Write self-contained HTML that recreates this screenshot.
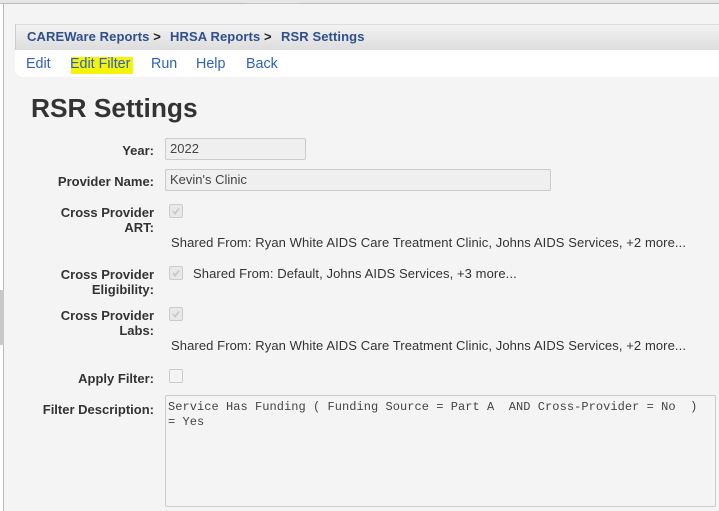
<!DOCTYPE html>
<html><head><style>
body{margin:0;width:719px;height:511px;overflow:hidden;background:#fff;font-family:"Liberation Sans",sans-serif;position:relative}
.abs{position:absolute}
.lbl{position:absolute;right:565px;text-align:right;font-weight:bold;font-size:13px;color:#333;line-height:15px}
.txt{position:absolute;font-size:13px;color:#333;letter-spacing:0.09px}
.cb{position:absolute;width:12px;height:12px;border:1px solid #ccc;border-radius:2px;background:#e8e8e8;left:169px}
.cb svg{position:absolute;left:1px;top:1px}
.m{position:absolute;top:56px;font-size:14.3px;color:#2f5fc0}
.bc{position:absolute;top:29px;font-size:13px;font-weight:bold;color:#2f4f8f;letter-spacing:0.1px}
</style></head><body>
<div class="abs" style="left:0;top:0;width:719px;height:3px;background:#e6e6e6"></div>
<div class="abs" style="left:0;top:3px;width:719px;height:1px;background:#bbb"></div>
<div class="abs" style="left:245px;top:3px;width:55px;height:7px;background:#c4c4c4"></div>
<div class="abs" style="left:3px;top:3px;width:1px;height:508px;background:#bbb"></div>
<div class="abs" style="left:0;top:290px;width:4px;height:55px;background:#c8c8c8"></div>
<div class="abs" style="left:4px;top:4px;width:715px;height:507px;background:#f4f4f4"></div>
<div class="abs" style="left:15px;top:24px;width:704px;height:26px;background:linear-gradient(#f2f2f2,#dcdcdc);border-left:1px solid #ccc;border-top:1px solid #ddd"></div>
<div class="bc" style="left:27px">CAREWare Reports <span style="color:#222">&gt;</span></div>
<div class="bc" style="left:170px">HRSA Reports <span style="color:#222">&gt;</span></div>
<div class="bc" style="left:281px">RSR Settings</div>
<div class="abs" style="left:15px;top:50px;width:704px;height:27px;background:#fff;border-radius:0 0 0 8px"></div>
<div class="abs" style="left:71px;top:57px;width:62px;height:17px;background:#f4f40a"></div>
<div class="m" style="left:26px">Edit</div>
<div class="m" style="left:70px">Edit Filter</div>
<div class="m" style="left:151px">Run</div>
<div class="m" style="left:196px">Help</div>
<div class="m" style="left:246px">Back</div>
<div class="abs" style="left:31px;top:93px;font-size:26.3px;font-weight:bold;color:#333">RSR Settings</div>

<div class="lbl" style="top:143px">Year:</div>
<div class="abs" style="left:165px;top:138px;width:139px;height:20px;border:1px solid #ccc;border-radius:2px;background:#efefef;font-size:13px;color:#444;line-height:20px;text-indent:4px">2022</div>
<div class="lbl" style="top:174px">Provider Name:</div>
<div class="abs" style="left:165px;top:169px;width:384px;height:20px;border:1px solid #ccc;border-radius:2px;background:#efefef;font-size:13px;color:#444;line-height:20px;text-indent:4px">Kevin's Clinic</div>

<div class="lbl" style="top:205px">Cross Provider<br>ART:</div>
<div class="cb" style="top:204px"><svg width="10" height="10"><path d="M2 5l2 2.5 4-5" stroke="#c8c8c8" stroke-width="1.8" fill="none"/></svg></div>
<div class="txt" style="left:171px;top:235px">Shared From: Ryan White AIDS Care Treatment Clinic, Johns AIDS Services, +2 more...</div>

<div class="lbl" style="top:267px">Cross Provider<br>Eligibility:</div>
<div class="cb" style="top:266px"><svg width="10" height="10"><path d="M2 5l2 2.5 4-5" stroke="#c8c8c8" stroke-width="1.8" fill="none"/></svg></div>
<div class="txt" style="left:193px;top:266px">Shared From: Default, Johns AIDS Services, +3 more...</div>

<div class="lbl" style="top:308px">Cross Provider<br>Labs:</div>
<div class="cb" style="top:307px"><svg width="10" height="10"><path d="M2 5l2 2.5 4-5" stroke="#c8c8c8" stroke-width="1.8" fill="none"/></svg></div>
<div class="txt" style="left:171px;top:338px">Shared From: Ryan White AIDS Care Treatment Clinic, Johns AIDS Services, +2 more...</div>

<div class="lbl" style="top:371px">Apply Filter:</div>
<div class="cb" style="top:369px;background:#f4f4f4"></div>

<div class="lbl" style="top:402px">Filter Description:</div>
<div class="abs" style="left:165px;top:395px;width:549px;height:110px;border:1px solid #ccc;border-radius:2px;background:#f4f4f4"></div>
<div class="abs" style="left:168px;top:400px;font-family:'Liberation Mono',monospace;font-size:12px;line-height:15px;color:#444;white-space:pre;letter-spacing:0.05px">Service Has Funding ( Funding Source = Part A  AND Cross-Provider = No  )
= Yes</div>
</body></html>
